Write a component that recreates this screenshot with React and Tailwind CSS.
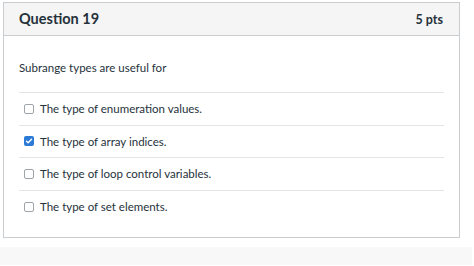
import React from "react";

const options = [
  { text: "The type of enumeration values.", checked: false },
  { text: "The type of array indices.", checked: true },
  { text: "The type of loop control variables.", checked: false },
  { text: "The type of set elements.", checked: false },
];

function Box({ checked }) {
  if (checked) {
    return (
      <span className="flex h-[10px] w-[10px] items-center justify-center rounded-[2px] bg-[#2b7bd6]">
        <svg width="8" height="8" viewBox="0 0 8 8">
          <path d="M1.5 4.2 L3.2 5.8 L6.5 2.2" fill="none" stroke="white" strokeWidth="1.4" strokeLinecap="round" strokeLinejoin="round" />
        </svg>
      </span>
    );
  }
  return <span className="block h-[10px] w-[10px] rounded-[2px] border border-[#9ea4a8] bg-white" />;
}

export default function App() {
  return (
    <div className="h-[266px] w-[474px] overflow-hidden bg-white" style={{ fontFamily: "Lato, 'Open Sans', sans-serif" }}>
      <div className="ml-[3px] mt-[2px] h-[236px] w-[457px] border border-[#c9cdd0] bg-white">
        <div className="flex h-[33px] items-baseline justify-between border-b border-[#c9cdd0] bg-[#f5f5f5] pl-[15px] pr-[16px] pt-[7px]">
          <span className="text-[14.5px] font-bold leading-[18px] text-[#26323b]">Question 19</span>
          <span className="text-[12.5px] font-bold leading-[18px] text-[#26323b]">5 pts</span>
        </div>
        <div className="px-[15px]">
          <div className="flex h-[56px] items-center pt-[8px] text-[11.5px] text-[#26323b]">Subrange types are useful for</div>
          {options.map((o, i) => (
            <div key={i} className="flex h-[32.6px] items-center gap-[6px] border-t border-[#e2e4e5] pl-[5px] text-[11.5px] text-[#26323b]">
              <Box checked={o.checked} />
              <span>{o.text}</span>
            </div>
          ))}
        </div>
      </div>
      <div className="mt-[9px] h-[18px] w-[472px] bg-[#f8f8f8]" />
    </div>
  );
}
